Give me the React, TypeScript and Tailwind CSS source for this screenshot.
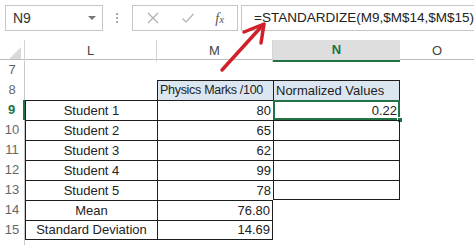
import React from 'react'

const font = { fontFamily: '"Liberation Sans", Arial, sans-serif' }

type Cell = {
    text?: string
    align?: 'left' | 'center' | 'right'
    t?: boolean
    l?: boolean
    r?: boolean
    b?: boolean
    head?: boolean
    tight?: boolean
    selected?: boolean
}

type Row = { num: number; cells: Cell[]; active?: boolean }

const rows: Row[] = [
    { num: 7, cells: [{}, {}, {}, {}] },
    {
        num: 8,
        cells: [
            {},
            { text: 'Physics Marks /100', align: 'left', t: true, l: true, head: true, tight: true },
            { text: 'Normalized Values', align: 'left', t: true, l: true, r: true, head: true },
            {},
        ],
    },
    {
        num: 9,
        active: true,
        cells: [
            { text: 'Student 1', align: 'center', t: true, l: true },
            { text: '80', align: 'right', t: true, l: true },
            { text: '0.22', align: 'right', t: true, l: true, r: true, selected: true },
            {},
        ],
    },
    {
        num: 10,
        cells: [
            { text: 'Student 2', align: 'center', t: true, l: true },
            { text: '65', align: 'right', t: true, l: true },
            { t: true, l: true, r: true },
            {},
        ],
    },
    {
        num: 11,
        cells: [
            { text: 'Student 3', align: 'center', t: true, l: true },
            { text: '62', align: 'right', t: true, l: true },
            { t: true, l: true, r: true },
            {},
        ],
    },
    {
        num: 12,
        cells: [
            { text: 'Student 4', align: 'center', t: true, l: true },
            { text: '99', align: 'right', t: true, l: true },
            { t: true, l: true, r: true },
            {},
        ],
    },
    {
        num: 13,
        cells: [
            { text: 'Student 5', align: 'center', t: true, l: true },
            { text: '78', align: 'right', t: true, l: true },
            { t: true, l: true, r: true, b: true },
            {},
        ],
    },
    {
        num: 14,
        cells: [
            { text: 'Mean', align: 'center', t: true, l: true },
            { text: '76.80', align: 'right', t: true, l: true, r: true },
            {},
            {},
        ],
    },
    {
        num: 15,
        cells: [
            { text: 'Standard Deviation', align: 'center', t: true, l: true, b: true },
            { text: '14.69', align: 'right', t: true, l: true, r: true, b: true },
            {},
            {},
        ],
    },
]

function GridCell({ cell }: { cell: Cell }) {
    const alignClass =
        cell.align === 'center' ? 'justify-center' : cell.align === 'right' ? 'justify-end pr-[2px]' : 'justify-start pl-[2px]'
    return (
        <div
            className={[
                'relative flex items-center h-[20px] whitespace-nowrap overflow-visible text-[#222]',
                cell.tight ? 'text-[12.5px] tracking-[-0.3px]' : 'text-[13px]',
                alignClass,
                cell.t ? 'border-t border-t-[#1e1e1e]' : '',
                cell.l ? 'border-l border-l-[#1e1e1e]' : '',
                cell.r ? 'border-r border-r-[#1e1e1e]' : '',
                cell.b ? 'border-b border-b-[#1e1e1e]' : '',
                cell.head ? 'bg-[#dce6f1]' : '',
            ].join(' ')}
        >
            {cell.text}
            {cell.selected && (
                <>
                    <div className="absolute -left-[1px] -top-[1px] -right-[1px] bottom-0 border-2 border-[#217346]" />
                    <div className="absolute -right-[4px] -bottom-[3px] w-[6px] h-[6px] bg-[#217346] border border-white" />
                </>
            )}
        </div>
    )
}

export default function App() {
    return (
        <div className="relative w-[474px] h-[245px] bg-white overflow-hidden" style={font}>
            {/* formula bar */}
            <div className="flex items-start h-[40px] pt-[5px] pl-[5px]">
                <div className="flex items-center justify-between w-[101px] h-[26px] border border-[#c6c6c6] pl-[7px] pr-[6px] text-[14px] text-[#333]">
                    <span>N9</span>
                    <span className="w-0 h-0 border-l-[4px] border-r-[4px] border-t-[4px] border-l-transparent border-r-transparent border-t-[#777]" />
                </div>
                <div className="flex flex-col items-center justify-center gap-[2px] w-[31px] h-[26px]">
                    <span className="w-[2px] h-[2px] bg-[#aaa]" />
                    <span className="w-[2px] h-[2px] bg-[#aaa]" />
                    <span className="w-[2px] h-[2px] bg-[#aaa]" />
                </div>
                <div className="flex items-center w-[110px] h-[26px] border border-[#c6c6c6]">
                    <svg width="14" height="14" viewBox="0 0 14 14" className="ml-[13px]">
                        <path d="M2 2 L12 12 M12 2 L2 12" stroke="#b0b0b0" strokeWidth="1.3" fill="none" />
                    </svg>
                    <svg width="14" height="14" viewBox="0 0 14 14" className="ml-[21px]">
                        <path d="M1.5 7.5 L5 11 L12.5 3" stroke="#b8b8b8" strokeWidth="1.5" fill="none" />
                    </svg>
                    <span className="ml-[20px] italic text-[14px] text-[#555]" style={{ fontFamily: '"Liberation Serif", serif' }}>
                        f<span className="text-[11px]">x</span>
                    </span>
                </div>
                <div className="flex items-center flex-1 h-[26px] ml-[3px] border border-r-0 border-[#c6c6c6] pl-[12px] text-[13.5px] text-[#222] whitespace-nowrap">
                    =STANDARDIZE(M9,$M$14,$M$15)
                </div>
            </div>

            {/* column headers */}
            <div className="grid grid-cols-[25px_132px_116px_127px_74px] h-[20px] border-b border-[#bdbdbd] text-[13px] text-[#444]">
                <div className="relative border-r border-[#d4d4d4]">
                    <svg width="12" height="12" viewBox="0 0 12 12" className="absolute right-[3px] bottom-[3px]">
                        <path d="M12 0 L12 12 L0 12 Z" fill="#dadada" />
                    </svg>
                </div>
                <div className="flex items-center justify-center border-r border-[#d4d4d4]">L</div>
                <div className="flex items-center justify-center border-r border-[#d4d4d4]">M</div>
                <div className="flex items-center justify-center bg-[#dedede] border-b-2 border-[#217346] text-[#217346] font-bold">N</div>
                <div className="flex items-center justify-center">O</div>
            </div>

            {/* rows */}
            {rows.map(row => (
                <div key={row.num} className="grid grid-cols-[25px_132px_116px_127px_74px] h-[20px]">
                    <div
                        className={
                            row.active
                                ? 'flex items-center justify-center border-r-2 border-[#217346] text-[#217346] font-bold text-[13px]'
                                : 'flex items-center justify-center border-r border-[#c8c8c8] text-[#666] text-[13px]'
                        }
                    >
                        {row.num}
                    </div>
                    {row.cells.map((c, i) => (
                        <GridCell key={i} cell={c} />
                    ))}
                </div>
            ))}
            <div className="grid grid-cols-[25px_449px] h-[20px]">
                <div className="border-r border-[#c8c8c8]" />
                <div />
            </div>

            {/* red arrow */}
            <svg className="absolute left-0 top-0 pointer-events-none" width="474" height="245">
                <path d="M222 70 L262 26" stroke="#d0202a" strokeWidth="3.5" strokeLinecap="round" fill="none" />
                <path d="M244 32 L264 24 L261 43" stroke="#d0202a" strokeWidth="3.5" strokeLinecap="round" strokeLinejoin="round" fill="none" />
            </svg>
        </div>
    )
}
